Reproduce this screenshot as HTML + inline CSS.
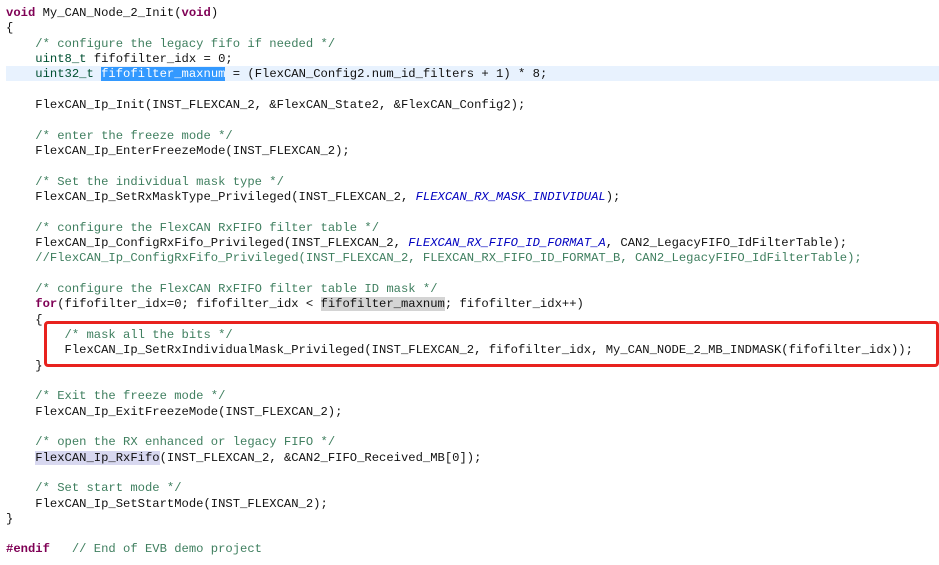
<!DOCTYPE html>
<html><head><meta charset="utf-8"><style>
html,body{margin:0;padding:0;background:#fff;width:939px;height:565px;overflow:hidden}
.c{position:absolute;left:6px;top:6px;font-family:"Liberation Mono",monospace;font-size:12.2px;line-height:15.34px;color:#111}
.l{height:15.34px;white-space:pre}
.k{color:#7f0055;font-weight:bold}
.t{color:#005032}
.m{color:#3f7f5f}
.i{color:#0000c0;font-style:italic}
.sel{background:#3399ff;color:#fff}
.g{background:#d4d4d4}
.p{background:#d8d8f0}
.cur{position:absolute;left:6px;right:0;top:66px;height:15px;background:#e8f2fe}
.box{position:absolute;left:44px;top:321px;width:889px;height:40px;border:3px solid #e8221e;border-radius:4px}
</style></head><body>
<div class="cur"></div>
<div class="c"><div class="l"><span class="k">void</span> My_CAN_Node_2_Init(<span class="k">void</span>)</div><div class="l">{</div><div class="l">    <span class="m">/* configure the legacy fifo if needed */</span></div><div class="l">    <span class="t">uint8_t</span> fifofilter_idx = 0;</div><div class="l">    <span class="t">uint32_t</span> <span class="sel">fifofilter_maxnum</span> = (FlexCAN_Config2.num_id_filters + 1) * 8;</div><div class="l"> </div><div class="l">    FlexCAN_Ip_Init(INST_FLEXCAN_2, &amp;FlexCAN_State2, &amp;FlexCAN_Config2);</div><div class="l"> </div><div class="l">    <span class="m">/* enter the freeze mode */</span></div><div class="l">    FlexCAN_Ip_EnterFreezeMode(INST_FLEXCAN_2);</div><div class="l"> </div><div class="l">    <span class="m">/* Set the individual mask type */</span></div><div class="l">    FlexCAN_Ip_SetRxMaskType_Privileged(INST_FLEXCAN_2, <span class="i">FLEXCAN_RX_MASK_INDIVIDUAL</span>);</div><div class="l"> </div><div class="l">    <span class="m">/* configure the FlexCAN RxFIFO filter table */</span></div><div class="l">    FlexCAN_Ip_ConfigRxFifo_Privileged(INST_FLEXCAN_2, <span class="i">FLEXCAN_RX_FIFO_ID_FORMAT_A</span>, CAN2_LegacyFIFO_IdFilterTable);</div><div class="l">    <span class="m">//FlexCAN_Ip_ConfigRxFifo_Privileged(INST_FLEXCAN_2, FLEXCAN_RX_FIFO_ID_FORMAT_B, CAN2_LegacyFIFO_IdFilterTable);</span></div><div class="l"> </div><div class="l">    <span class="m">/* configure the FlexCAN RxFIFO filter table ID mask */</span></div><div class="l">    <span class="k">for</span>(fifofilter_idx=0; fifofilter_idx &lt; <span class="g">fifofilter_maxnum</span>; fifofilter_idx++)</div><div class="l">    {</div><div class="l">        <span class="m">/* mask all the bits */</span></div><div class="l">        FlexCAN_Ip_SetRxIndividualMask_Privileged(INST_FLEXCAN_2, fifofilter_idx, My_CAN_NODE_2_MB_INDMASK(fifofilter_idx));</div><div class="l">    }</div><div class="l"> </div><div class="l">    <span class="m">/* Exit the freeze mode */</span></div><div class="l">    FlexCAN_Ip_ExitFreezeMode(INST_FLEXCAN_2);</div><div class="l"> </div><div class="l">    <span class="m">/* open the RX enhanced or legacy FIFO */</span></div><div class="l">    <span class="p">FlexCAN_Ip_RxFifo</span>(INST_FLEXCAN_2, &amp;CAN2_FIFO_Received_MB[0]);</div><div class="l"> </div><div class="l">    <span class="m">/* Set start mode */</span></div><div class="l">    FlexCAN_Ip_SetStartMode(INST_FLEXCAN_2);</div><div class="l">}</div><div class="l"> </div><div class="l"><span class="k">#endif</span>   <span class="m">// End of EVB demo project</span></div></div>
<div class="box"></div>
</body></html>
